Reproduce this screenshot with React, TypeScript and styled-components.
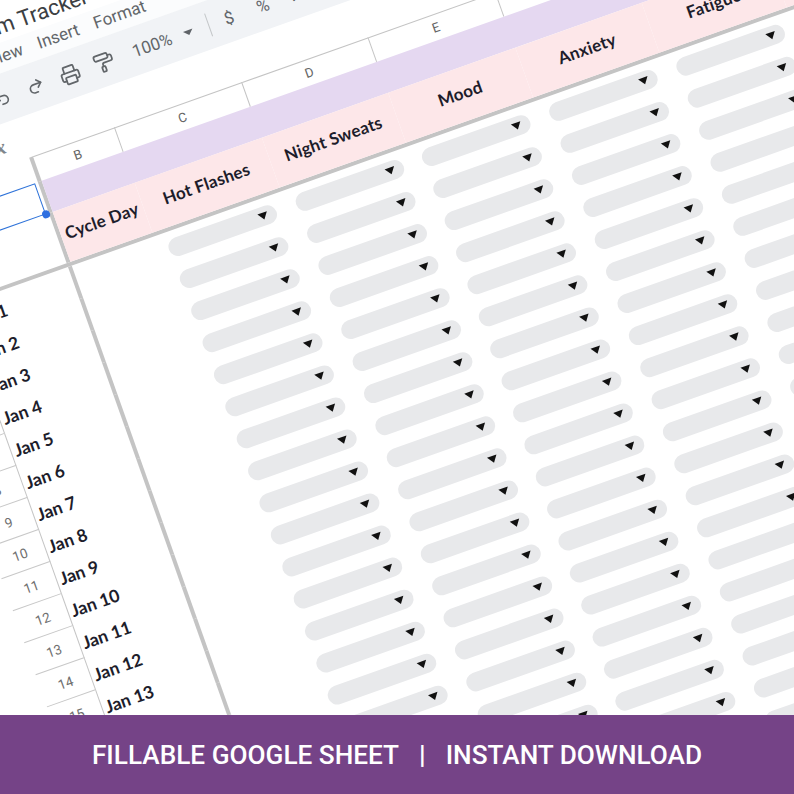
import React from 'react';
import styled, { createGlobalStyle, css } from 'styled-components';
import { Printer, PaintRoller, Redo2, Undo2 } from 'lucide-react';

const GlobalStyle = createGlobalStyle`
  html, body {
    margin: 0;
    padding: 0;
    background: #fff;
  }
`;

const Page = styled.div`
  width: 794px;
  height: 794px;
  display: flex;
  flex-direction: column;
  overflow: hidden;
  background: #fff;
`;

const Stage = styled.div`
  height: 715px;
  overflow: hidden;
  flex-shrink: 0;
`;

// the whole spreadsheet is tilted, the way the product mockup shows it
const Sheet = styled.div`
  width: 1130px;
  transform-origin: 0 0;
  transform: translate(-178.4px, 72.2px) rotate(-19.55deg);
  font-family: Roboto, "Liberation Sans", sans-serif;
`;

const TitleRow = styled.div`
  height: 32px;
  padding-left: 104px;
  display: flex;
  align-items: center;
  font-size: 22px;
  color: #3c4043;
`;

const MenuRow = styled.div`
  height: 29px;
  padding-left: 73px;
  padding-bottom: 3px;
  box-sizing: border-box;
  display: flex;
  align-items: center;
  gap: 16px;
  font-size: 17px;
  color: #62666a;
  background: #fbfcfd;
`;

const Toolbar = styled.div`
  height: 48px;
  padding-left: 143px;
  display: flex;
  align-items: center;
  background: #f1f3f6;
  color: #62666a;
`;

const ToolButton = styled.div`
  width: 36px;
  display: flex;
  justify-content: center;
`;

const ZoomValue = styled.span`
  margin-left: 13px;
  font-size: 17px;
`;

const ZoomCaret = styled.span`
  margin-left: 13px;
  border-left: 5px solid transparent;
  border-right: 5px solid transparent;
  border-top: 5px solid #5f6368;
`;

const ToolDivider = styled.span`
  margin-left: 16px;
  width: 1px;
  height: 24px;
  background: #c4c7c9;
`;

const ToolSymbol = styled.span`
  width: 36px;
  text-align: center;
  font-size: 17px;
`;

const FirstSymbol = styled(ToolSymbol)`
  margin-left: 3px;
`;

const FormulaBar = styled.div`
  height: 41px;
  padding-left: 131px;
  padding-top: 3px;
  box-sizing: border-box;
  display: flex;
  align-items: center;
  font-family: "Liberation Serif", serif;
  font-style: italic;
  font-size: 21px;
  font-weight: 700;
  color: #80868b;
`;

const gridColumns = css`
  display: grid;
  grid-template-columns: 52px 114.5px 4px 87.5px repeat(6, 134.6px);
`;

const LetterRow = styled.div`
  ${gridColumns}
  height: 26px;
`;

const Letter = styled.div`
  display: flex;
  align-items: center;
  justify-content: center;
  font-size: 13px;
  color: #666;
  border-top: 1px solid #c4c4c4;
  border-right: 1px solid #c4c4c4;
`;

const BandRow = styled.div`
  ${gridColumns}
  height: 33px;
`;

const SelectedCell = styled.div`
  position: relative;
  margin-right: 3px;
  border: 1.5px solid #2f73d9;
`;

const SelectionHandle = styled.span`
  position: absolute;
  right: -5px;
  bottom: -5px;
  width: 8px;
  height: 8px;
  border-radius: 50%;
  background: #2f6fe0;
`;

const PurpleBand = styled.div`
  grid-column: 4 / -1;
  background: #e5d8f1;
`;

const HeaderRow = styled.div`
  ${gridColumns}
  height: 53px;
  border-bottom: 4px solid #c4c4c4;
`;

const HeaderCell = styled.div`
  display: flex;
  align-items: center;
  justify-content: center;
  padding-bottom: 5px;
  background: #fde7e9;
  font-family: Lato, "Open Sans", sans-serif;
  font-weight: 700;
  font-size: 17px;
  letter-spacing: 0.2px;
  color: #1d1d2b;
  white-space: nowrap;
`;

const FrozenLine = styled.div`
  background: #c4c4c4;
`;

const BodyRow = styled.div`
  ${gridColumns}
  height: 34px;
`;

const RowNumber = styled.div`
  display: flex;
  align-items: center;
  justify-content: center;
  font-size: 13.5px;
  color: #6f6f6f;
  border-bottom: 1px solid #c8c8c8;
  border-right: 1px solid #c4c4c4;
`;

const DateCell = styled.div`
  display: flex;
  align-items: center;
  padding: 4px 0 0 3px;
  box-sizing: border-box;
  font-family: Lato, "Open Sans", sans-serif;
  font-weight: 700;
  font-size: 17.5px;
  color: #1d1d2b;
`;

const PillCell = styled.div`
  display: flex;
  align-items: center;
  justify-content: center;
`;

const Pill = styled.div`
  width: 114px;
  height: 19px;
  padding-right: 9px;
  box-sizing: border-box;
  border-radius: 10px;
  display: flex;
  align-items: center;
  justify-content: flex-end;
  background: #e8e9eb;
`;

const PillCaret = styled.span`
  border-left: 5.5px solid transparent;
  border-right: 5.5px solid transparent;
  border-top: 7px solid #111;
`;

const Banner = styled.div`
  flex: 1;
  display: flex;
  align-items: center;
  justify-content: center;
  gap: 20px;
  background: #754387;
  color: #fff;
  font-family: Roboto, "Liberation Sans", sans-serif;
  font-weight: 500;
  font-size: 26.2px;
  white-space: pre;
`;

const BannerDivider = styled.span`
  font-weight: 700;
`;

const menuItems = ['File', 'Edit', 'View', 'Insert', 'Format'];
const letters = ['B', 'C', 'D', 'E', 'F', 'G', 'H'];
const headers = ['Cycle Day', 'Hot Flashes', 'Night Sweats', 'Mood', 'Anxiety', 'Fatigue', ''];
const pillColumns = [0, 1, 2, 3, 4, 5];
const rows = Array.from({ length: 20 }, (_, i) => i + 3);

const App: React.FC = () => {
  return (
    <Page>
      <GlobalStyle />
      <Stage>
        <Sheet>
          <TitleRow>Symptom Tracker</TitleRow>
          <MenuRow>
            {menuItems.map((item) => (
              <span key={item}>{item}</span>
            ))}
          </MenuRow>
          <Toolbar>
            <ToolButton><Undo2 size={18} strokeWidth={2.2} /></ToolButton>
            <ToolButton><Redo2 size={18} strokeWidth={2.2} /></ToolButton>
            <ToolButton><Printer size={21} strokeWidth={2} /></ToolButton>
            <ToolButton><PaintRoller size={21} strokeWidth={2} /></ToolButton>
            <ZoomValue>100%</ZoomValue>
            <ZoomCaret />
            <ToolDivider />
            <FirstSymbol>$</FirstSymbol>
            <ToolSymbol>%</ToolSymbol>
            <ToolSymbol>.0</ToolSymbol>
          </Toolbar>
          <FormulaBar>fx</FormulaBar>
          <LetterRow>
            <div />
            <div />
            <FrozenLine />
            {letters.map((letter) => (
              <Letter key={letter}>{letter}</Letter>
            ))}
          </LetterRow>
          <BandRow>
            <div />
            <SelectedCell>
              <SelectionHandle />
            </SelectedCell>
            <FrozenLine />
            <PurpleBand />
          </BandRow>
          <HeaderRow>
            <div />
            <div />
            <FrozenLine />
            {headers.map((header, i) => (
              <HeaderCell key={i}>{header}</HeaderCell>
            ))}
          </HeaderRow>
          {rows.map((row) => (
            <BodyRow key={row}>
              <RowNumber>{row}</RowNumber>
              <DateCell>Jan {row - 2}</DateCell>
              <FrozenLine />
              <div />
              {pillColumns.map((col) => (
                <PillCell key={col}>
                  <Pill>
                    <PillCaret />
                  </Pill>
                </PillCell>
              ))}
            </BodyRow>
          ))}
        </Sheet>
      </Stage>
      <Banner>
        <span>FILLABLE GOOGLE SHEET</span>
        <BannerDivider>|</BannerDivider>
        <span>INSTANT DOWNLOAD</span>
      </Banner>
    </Page>
  );
};

export default App;
